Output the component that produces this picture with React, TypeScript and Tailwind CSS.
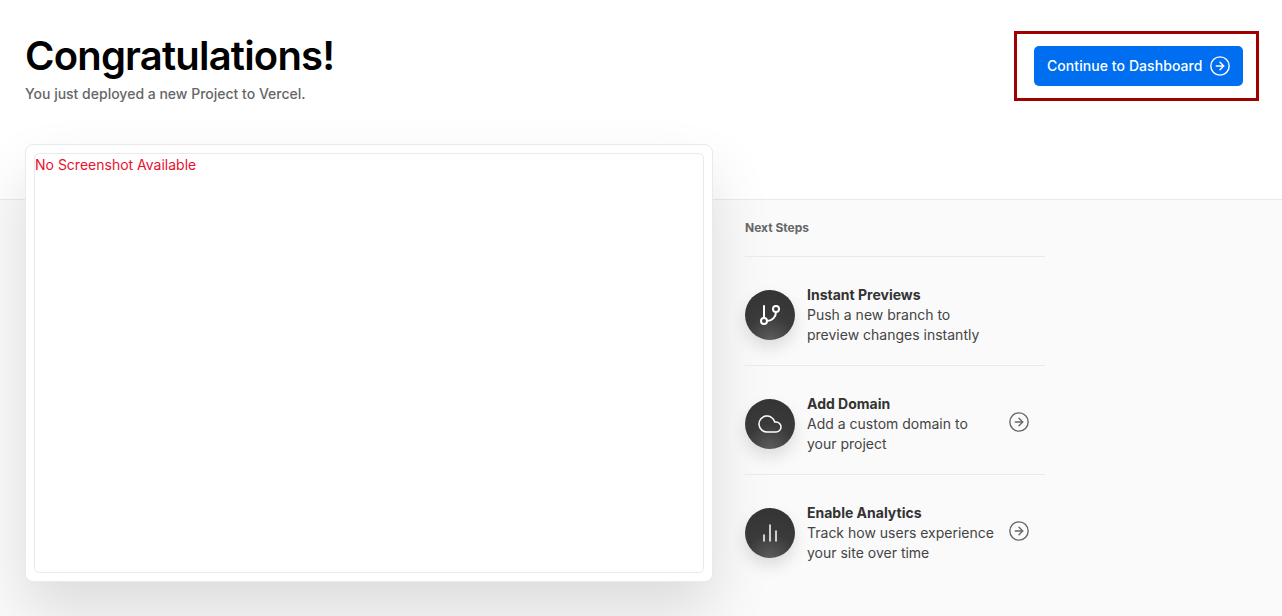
const ArrowCircle = ({ className }: { className: string }) => (
  <svg viewBox="0 0 24 24" fill="none" stroke="currentColor" strokeWidth="1.5" strokeLinecap="round" strokeLinejoin="round" className={className}>
    <circle cx="12" cy="12" r="10" />
    <path d="M12 16l4-4-4-4" />
    <path d="M8 12h8" />
  </svg>
)

const BranchIcon = () => (
  <svg viewBox="0 0 24 24" fill="none" stroke="currentColor" strokeWidth="2" strokeLinecap="round" strokeLinejoin="round" className="w-6 h-6">
    <path d="M6 3v12" />
    <circle cx="18" cy="6" r="3" />
    <circle cx="6" cy="18" r="3" />
    <path d="M18 9a9 9 0 01-9 9" />
  </svg>
)

const CloudIcon = () => (
  <svg viewBox="0 0 24 24" fill="none" stroke="currentColor" strokeWidth="1.5" strokeLinecap="round" strokeLinejoin="round" className="w-6 h-6">
    <path d="M18 10h-1.26A8 8 0 109 20h9a5 5 0 000-10z" />
  </svg>
)

const BarsIcon = () => (
  <svg viewBox="0 0 24 24" fill="none" stroke="currentColor" strokeWidth="1.5" strokeLinecap="round" strokeLinejoin="round" className="w-6 h-6">
    <path d="M18 20V10" />
    <path d="M12 20V4" />
    <path d="M6 20v-6" />
  </svg>
)

const steps = [
  { title: 'Instant Previews', lines: ['Push a new branch to', 'preview changes instantly'], icon: <BranchIcon />, arrow: false },
  { title: 'Add Domain', lines: ['Add a custom domain to', 'your project'], icon: <CloudIcon />, arrow: true },
  { title: 'Enable Analytics', lines: ['Track how users experience', 'your site over time'], icon: <BarsIcon />, arrow: true },
]

const App = () => {
  return (
    <div className="min-h-screen flex flex-col bg-[#fafafa] font-['Inter',sans-serif] overflow-hidden">
      {/* Header */}
      <header className="h-[200px] shrink-0 bg-white border-b border-[#eaeaea] flex justify-between items-start pr-[23px] pl-[25px]">
        <div className="pt-[31px]">
          <h1 className="text-[40px] leading-[50px] font-semibold tracking-[-0.02em] text-black">Congratulations!</h1>
          <p className="text-sm leading-[22px] font-medium text-[#666] mt-[2px]">You just deployed a new Project to Vercel.</p>
        </div>
        <div className="mt-[31px] w-[245px] h-[70px] border-[3px] border-[#a00000] flex items-center justify-end pr-[13px]">
          <button className="w-[209px] h-10 rounded-[5px] bg-[#006ef0] text-white text-sm font-medium flex items-center justify-between pl-[13px] pr-[12px] tracking-[0.005em]">
            Continue to Dashboard
            <ArrowCircle className="w-[22px] h-[22px]" />
          </button>
        </div>
      </header>

      {/* Body */}
      <main className="flex items-start pl-[25px] gap-8">
        <div className="-mt-[56px] w-[688px] h-[438px] shrink-0 rounded-lg border border-[#eaeaea] bg-white p-2 shadow-[0_30px_60px_rgba(0,0,0,0.12)]">
          <div className="w-full h-full rounded-[5px] border border-[#eaeaea] pt-px text-sm leading-[20px] text-[#e8112d]">
            No Screenshot Available
          </div>
        </div>

        <section className="w-[300px] shrink-0">
          <h2 className="h-[56px] pt-5 text-xs leading-4 font-bold text-[#666]">Next Steps</h2>
          {steps.map((step) => (
            <div key={step.title} className="h-[109px] pt-2 border-t border-[#eaeaea] flex items-center">
              <div className="w-[50px] h-[50px] rounded-full shrink-0 flex items-center justify-center text-white bg-[radial-gradient(circle_at_50%_100%,#5c5c5c_0%,#3a3a3a_45%,#333_100%)] shadow-[0_8px_16px_rgba(0,0,0,0.12)]">
                {step.icon}
              </div>
              <div className="ml-3 flex-1 text-sm leading-5 text-[#444]">
                <h3 className="font-bold text-[#333]">{step.title}</h3>
                {step.lines.map((line) => (
                  <p key={line}>{line}</p>
                ))}
              </div>
              {step.arrow && <ArrowCircle className="w-[22px] h-[22px] mr-[15px] mb-[4px] text-[#666]" />}
            </div>
          ))}
        </section>
      </main>
    </div>
  )
}

export default App
